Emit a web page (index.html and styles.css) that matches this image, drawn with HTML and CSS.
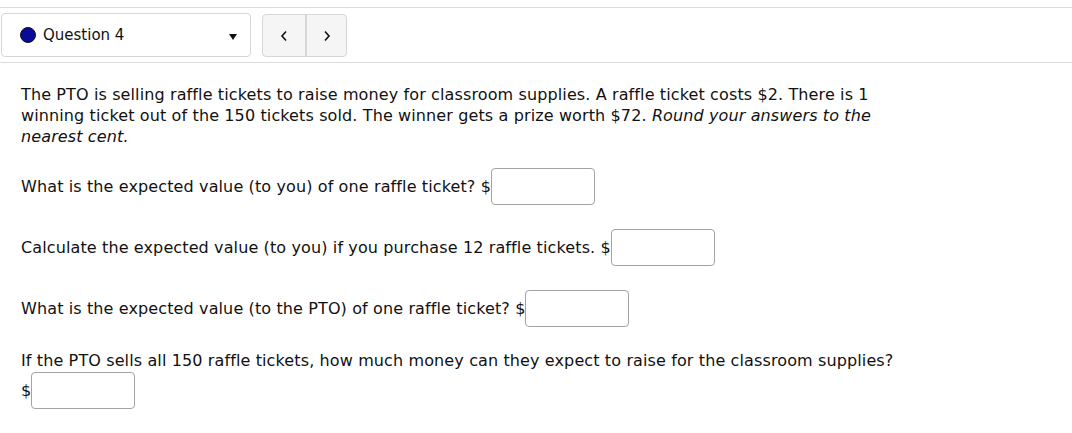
FILE: index.html
```html
<!DOCTYPE html>
<html lang="en">
<head>
	<meta charset="UTF-8">
	<title>Question 4</title>
	<link rel="stylesheet" href="styles.css">
</head>
<body>
<div class="toolbar">
	<div class="picker">
		<i class="dot"></i>
		<span class="picker-label">Question 4</span>
		<i class="caret"></i>
	</div>
	<div class="pager">
		<button class="pager-btn" aria-label="Previous">
			<svg width="8" height="12" viewBox="0 0 8 12"><polyline points="6,1.5 2,6 6,10.5" fill="none" stroke="#111" stroke-width="1.6"/></svg>
		</button>
		<button class="pager-btn" aria-label="Next">
			<svg width="8" height="12" viewBox="0 0 8 12"><polyline points="2,1.5 6,6 2,10.5" fill="none" stroke="#111" stroke-width="1.6"/></svg>
		</button>
	</div>
</div>
<div class="content">
	<p class="intro">The PTO is selling raffle tickets to raise money for classroom supplies. A raffle ticket costs $2. There is 1 winning ticket out of the 150 tickets sold. The winner gets a prize worth $72. <em>Round your answers to the nearest cent.</em></p>
	<div class="question">
		<span>What is the expected value (to you) of one raffle ticket? $</span><input class="answer" type="text">
	</div>
	<div class="question">
		<span>Calculate the expected value (to you) if you purchase 12 raffle tickets. $</span><input class="answer" type="text">
	</div>
	<div class="question">
		<span>What is the expected value (to the PTO) of one raffle ticket? $</span><input class="answer" type="text">
	</div>
	<div class="question last">
		<p class="prompt">If the PTO sells all 150 raffle tickets, how much money can they expect to raise for the classroom supplies?</p>
		<div class="question-row"><span>$</span><input class="answer" type="text"></div>
	</div>
</div>
</body>
</html>
```
FILE: styles.css
```css
body {
	margin: 0;
	background: #FFF;
	color: #111;
	font-family: "DejaVu Sans", Verdana, sans-serif;
	font-size: 16px;
	letter-spacing: 0.12px;
}

.toolbar {
	margin-top: 7px;
	height: 54px;
	border-top: 1px solid #DCDCDC;
	border-bottom: 1px solid #DCDCDC;
	display: flex;
	align-items: flex-start;
	padding-left: 1px;
}

.picker {
	margin-top: 5px;
	width: 248px;
	height: 42px;
	border: 1px solid #D6D6D6;
	border-radius: 4px;
	display: flex;
	align-items: center;
	padding-left: 18px;
	box-sizing: border-box;
	width: 250px;
	height: 44px;
}

.dot {
	width: 14px;
	height: 14px;
	border-radius: 50%;
	background: #0A0A9A;
	border: 1px solid #111;
	margin-right: 7px;
}

.picker-label {
	flex: 1;
	font-size: 15px;
	letter-spacing: 0;
}

.caret {
	width: 0;
	height: 0;
	border-left: 4px solid transparent;
	border-right: 4px solid transparent;
	border-top: 6px solid #111;
	margin-right: 13px;
	margin-top: 3px;
}

.pager {
	margin-top: 6px;
	margin-left: 11px;
	height: 43px;
	display: flex;
	border: 1px solid #D6D6D6;
	border-radius: 4px;
	background: #F5F5F5;
	box-sizing: border-box;
	overflow: hidden;
}

.pager-btn {
	width: 42px;
	border: none;
	background: transparent;
	display: flex;
	align-items: center;
	justify-content: center;
	padding: 0;
	cursor: pointer;
}

.pager-btn + .pager-btn {
	border-left: 2px solid #D6D6D6;
	width: 41px;
}

.content {
	padding: 21px 0 0 21px;
	line-height: 21px;
}

.intro {
	margin: 0 0 21px;
	width: 870px;
}

.intro em {
	font-style: italic;
}

.question {
	display: flex;
	align-items: center;
	margin-bottom: 24px;
}

.question.last {
	display: block;
	margin-bottom: 0;
	margin-top: -1px;
}

.prompt {
	margin: 0 0 1px;
}

.question-row {
	display: flex;
	align-items: center;
}

.answer {
	width: 104px;
	height: 37px;
	box-sizing: border-box;
	border: 1px solid #A3A3A3;
	border-radius: 4px;
	margin: 0;
	padding: 0 6px;
	font: inherit;
}
```
